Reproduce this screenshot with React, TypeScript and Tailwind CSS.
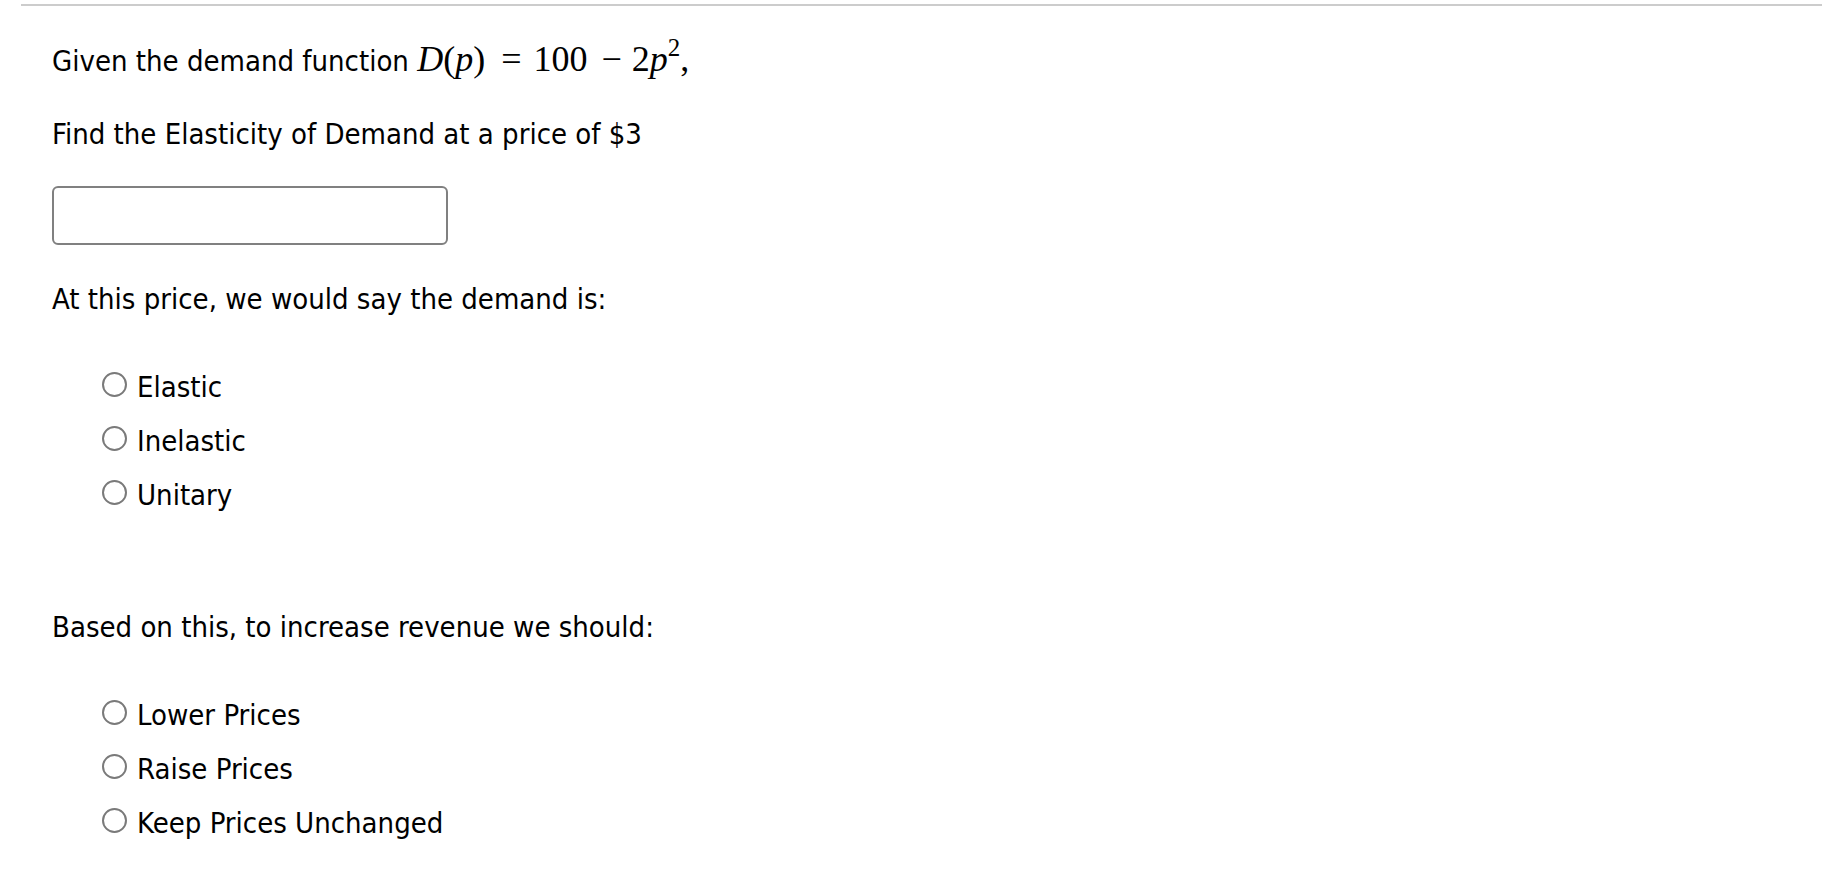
import { useState } from 'react'

const sans = { fontFamily: '"DejaVu Sans Condensed", "DejaVu Sans", sans-serif' }
const serif = { fontFamily: '"Liberation Serif", "Times New Roman", serif' }

function RadioGroup({ name, options }: { name: string; options: string[] }) {
  const [value, setValue] = useState('')
  return (
    <div className="flex flex-col gap-[20px] pl-[50px]">
      {options.map((o) => (
        <label key={o} className="flex h-[34px] items-start gap-[10px] text-[29px] leading-[34px]">
          <input
            type="radio"
            name={name}
            checked={value === o}
            onChange={() => setValue(o)}
            className="mt-[2px] h-[25px] w-[25px] shrink-0 appearance-none rounded-full border-2 border-[#7a7a7a] bg-white checked:border-[7px] checked:border-[#2b7abc]"
          />
          <span>{o}</span>
        </label>
      ))}
    </div>
  )
}

export default function App() {
  const [answer, setAnswer] = useState('')

  return (
    <div className="min-h-screen bg-white text-black" style={sans}>
      <div className="ml-[21px] mt-[4px] h-[2px] bg-[#cccccc]" />
      <div className="pl-[52px] text-[29px] leading-[34px]">
        <p className="mt-[29px] h-[34px] whitespace-nowrap">
          Given the demand function{' '}
          <span className="text-[36px] leading-[34px]" style={serif}>
            <i>D</i>(<i>p</i>)<span className="ml-[16px] mr-[12px]">=</span>100
            <span className="ml-[14px] mr-[10px]">−</span>2<i>p</i>
            <span className="align-[15px] text-[25px] leading-none">2</span>,
          </span>
        </p>
        <p className="mt-[48px]">Find the Elasticity of Demand at a price of $3</p>
        <input
          value={answer}
          onChange={(e) => setAnswer(e.target.value)}
          className="mt-[35px] block h-[59px] w-[396px] rounded-[6px] border-2 border-[#808080] px-3 text-[28px] outline-none"
        />
        <p className="mt-[37px]">At this price, we would say the demand is:</p>
        <div className="mt-[54px]">
          <RadioGroup name="elasticity" options={['Elastic', 'Inelastic', 'Unitary']} />
        </div>
        <p className="mt-[98px]">Based on this, to increase revenue we should:</p>
        <div className="mt-[54px]">
          <RadioGroup name="revenue" options={['Lower Prices', 'Raise Prices', 'Keep Prices Unchanged']} />
        </div>
      </div>
    </div>
  )
}
